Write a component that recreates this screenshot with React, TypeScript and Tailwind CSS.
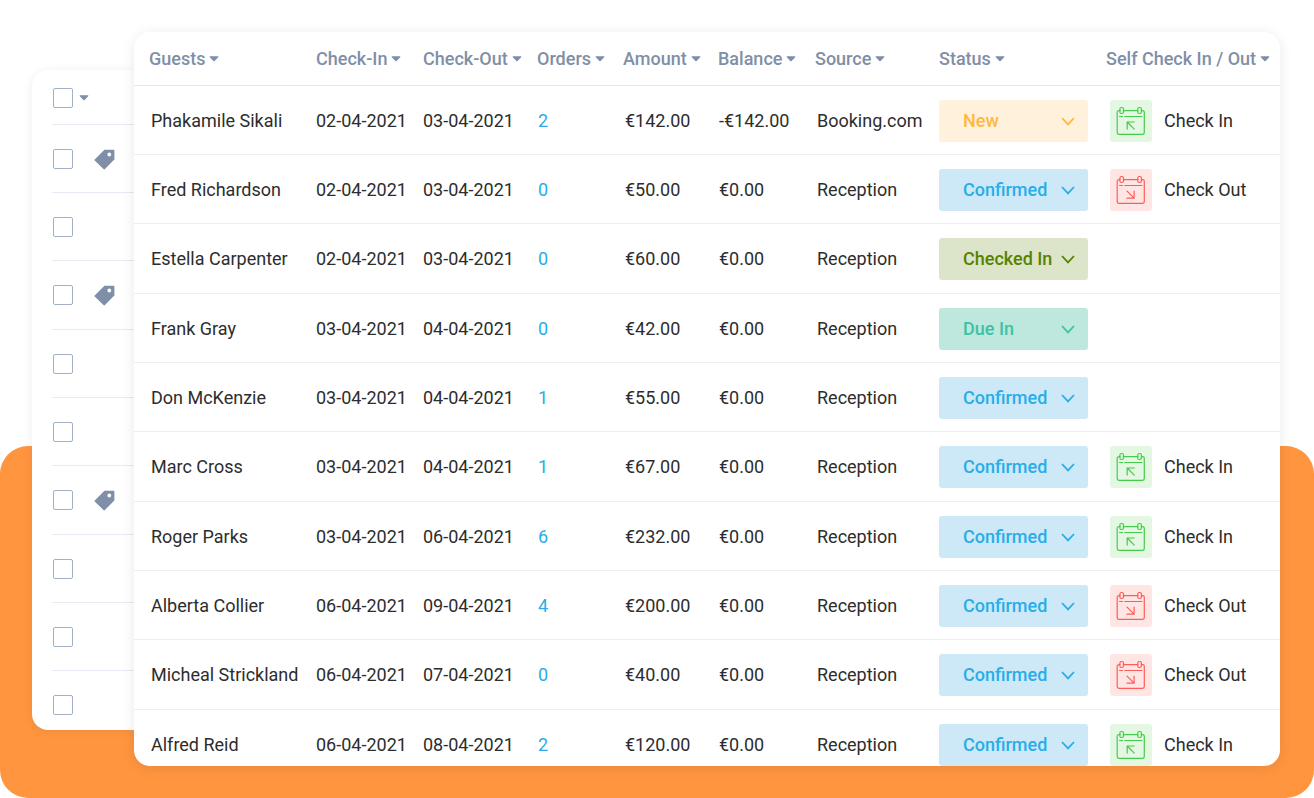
import React from 'react';
import clsx from 'clsx';

type Status = 'New' | 'Confirmed' | 'Checked In' | 'Due In';
type SelfCheck = 'in' | 'out';

interface Booking {
  guest: string;
  checkIn: string;
  checkOut: string;
  orders: number;
  amount: string;
  balance: string;
  source: string;
  status: Status;
  selfCheck?: SelfCheck;
}

const statusStyles: Record<Status, string> = {
  New: 'bg-[#fff1dc] text-[#ffb840]',
  Confirmed: 'bg-[#cde8f7] text-[#27aee8]',
  'Checked In': 'bg-[#dce5ca] text-[#578200]',
  'Due In': 'bg-[#bee8dd] text-[#3fc1a5]',
};

const statuses = Object.keys(statusStyles) as Status[];

const columns = [
  { label: 'Guests', width: 'w-[182px]', pad: 'pl-[15px]' },
  { label: 'Check-In', width: 'w-[107px]' },
  { label: 'Check-Out', width: 'w-[114px]' },
  { label: 'Orders', width: 'w-[86px]' },
  { label: 'Amount', width: 'w-[95px]' },
  { label: 'Balance', width: 'w-[97px]' },
  { label: 'Source', width: 'w-[124px]' },
  { label: 'Status', width: 'w-[167px]' },
  { label: 'Self Check In / Out', width: 'w-[174px]' },
];

const bookings: Booking[] = [
  { guest: 'Phakamile Sikali', checkIn: '02-04-2021', checkOut: '03-04-2021', orders: 2, amount: '€142.00', balance: '-€142.00', source: 'Booking.com', status: 'New', selfCheck: 'in' },
  { guest: 'Fred Richardson', checkIn: '02-04-2021', checkOut: '03-04-2021', orders: 0, amount: '€50.00', balance: '€0.00', source: 'Reception', status: 'Confirmed', selfCheck: 'out' },
  { guest: 'Estella Carpenter', checkIn: '02-04-2021', checkOut: '03-04-2021', orders: 0, amount: '€60.00', balance: '€0.00', source: 'Reception', status: 'Checked In' },
  { guest: 'Frank Gray', checkIn: '03-04-2021', checkOut: '04-04-2021', orders: 0, amount: '€42.00', balance: '€0.00', source: 'Reception', status: 'Due In' },
  { guest: 'Don McKenzie', checkIn: '03-04-2021', checkOut: '04-04-2021', orders: 1, amount: '€55.00', balance: '€0.00', source: 'Reception', status: 'Confirmed' },
  { guest: 'Marc Cross', checkIn: '03-04-2021', checkOut: '04-04-2021', orders: 1, amount: '€67.00', balance: '€0.00', source: 'Reception', status: 'Confirmed', selfCheck: 'in' },
  { guest: 'Roger Parks', checkIn: '03-04-2021', checkOut: '06-04-2021', orders: 6, amount: '€232.00', balance: '€0.00', source: 'Reception', status: 'Confirmed', selfCheck: 'in' },
  { guest: 'Alberta Collier', checkIn: '06-04-2021', checkOut: '09-04-2021', orders: 4, amount: '€200.00', balance: '€0.00', source: 'Reception', status: 'Confirmed', selfCheck: 'out' },
  { guest: 'Micheal Strickland', checkIn: '06-04-2021', checkOut: '07-04-2021', orders: 0, amount: '€40.00', balance: '€0.00', source: 'Reception', status: 'Confirmed', selfCheck: 'out' },
  { guest: 'Alfred Reid', checkIn: '06-04-2021', checkOut: '08-04-2021', orders: 2, amount: '€120.00', balance: '€0.00', source: 'Reception', status: 'Confirmed', selfCheck: 'in' },
];

// one entry per row of the selection list, true when the row is tagged
const tagged = [true, false, true, false, false, true, false, false, false];

function Caret() {
  return (
    <svg width="10" height="6" viewBox="0 0 10 6" fill="currentColor" className="shrink-0" aria-hidden="true">
      <path d="M1.2 0.3h7.6c.5 0 .7.5.4.9L5.6 5a.8.8 0 0 1-1.2 0L.8 1.200c-.3-.4-.1-.9.4-.9z" />
    </svg>
  );
}

function TagIcon() {
  return (
    <svg width="21" height="21" viewBox="0 0 21 21" fill="#7f8fa7" aria-hidden="true">
      <path
        fillRule="evenodd"
        d="M10.800.8h8.900c.4 0 .7.3.7.7v8.500c0 .3-.1.500-.3.7L10.700 20.200c-.3.3-.7.3-1 0L.7 11.500c-.3-.3-.3-.7 0-1L10.200 1c.2-.1.4-.2.6-.2zM15.300 3.600a1.900 1.900 0 1 0 0 3.800 1.900 1.900 0 0 0 0-3.800z"
      />
    </svg>
  );
}

function CalendarIcon({ type }: { type: SelfCheck }) {
  return (
    <svg
      width="42"
      height="42"
      viewBox="0 0 42 42"
      fill="none"
      stroke="currentColor"
      strokeWidth="1.2"
      strokeLinecap="round"
      strokeLinejoin="round"
      aria-hidden="true"
    >
      <path d="M9.900 10.600H8.900a1.700 1.700 0 0 0-1.700 1.700v20.300a1.700 1.700 0 0 0 1.700 1.700h23.700a1.700 1.700 0 0 0 1.700-1.700V12.300a1.700 1.700 0 0 0-1.700-1.700h-1.200M13.500 10.600h14.300" />
      <rect x="9.900" y="7.500" width="3.600" height="6" rx="1.500" />
      <rect x="27.800" y="7.500" width="3.600" height="6" rx="1.500" />
      <path d="M9.500 16.500h3M14.800 16.500h17.200" />
      {type === 'in' ? (
        <path d="M24.300 22H17.200v7.100M17.200 22l7.100 7.100" />
      ) : (
        <path d="M17 29.200h7.100v-7.100M24.100 29.200L17 22.100" />
      )}
    </svg>
  );
}

function StatusSelect({ status, guest }: { status: Status; guest: string }) {
  return (
    <div className={clsx('relative w-[149px] h-[42px] rounded-[3px]', statusStyles[status])}>
      <select
        defaultValue={status}
        aria-label={`Status of ${guest}`}
        className="block w-full h-full appearance-none bg-transparent pl-6 pr-8 font-medium cursor-pointer"
      >
        {statuses.map((s) => (
          <option key={s}>{s}</option>
        ))}
      </select>
      <svg
        width="14"
        height="9"
        viewBox="0 0 14 9"
        fill="none"
        stroke="currentColor"
        strokeWidth="1.8"
        className="absolute right-[13px] top-[17px] pointer-events-none"
        aria-hidden="true"
      >
        <path d="M1 1l6 6.400L13 1" />
      </svg>
    </div>
  );
}

function SelfCheckButton({ type }: { type: SelfCheck }) {
  return (
    <button className="flex items-center gap-3 cursor-pointer">
      <span
        className={clsx(
          'rounded-[3px]',
          type === 'in' ? 'bg-[#e3f7e3] text-[#47cb4b]' : 'bg-[#ffe6e5] text-[#ff5c58]'
        )}
      >
        <CalendarIcon type={type} />
      </span>
      {type === 'in' ? 'Check In' : 'Check Out'}
    </button>
  );
}

function Checkbox({ label }: { label: string }) {
  return (
    <input
      type="checkbox"
      aria-label={label}
      className="block size-5 shrink-0 appearance-none rounded-[2px] border border-[#a3afc2] bg-white checked:bg-[#7f8fa7]"
    />
  );
}

function SelectionList() {
  return (
    <aside className="mt-[38px] w-[102px] shrink-0 self-start rounded-l-2xl bg-white pl-5 shadow-[0_1px_10px_rgba(0,0,0,0.07)] text-[#7f8fa7]">
      <div className="flex items-center gap-1.5 pt-[18px] pb-4 pl-px">
        <Checkbox label="Select all" />
        <button aria-label="Selection options">
          <Caret />
        </button>
      </div>
      <ul>
        {tagged.map((hasTag, i) => (
          <li
            key={i}
            className="flex h-[68px] items-start gap-[21px] border-t border-[#e6eaf2] pt-6 pl-px not-last:nth-[3n]:h-[69px] last:h-[60px]"
          >
            <Checkbox label={`Select ${bookings[i].guest}`} />
            {hasTag && <TagIcon />}
          </li>
        ))}
      </ul>
    </aside>
  );
}

function BookingsTable() {
  return (
    <main className="relative min-w-0 flex-1 overflow-hidden rounded-2xl bg-white shadow-[0_2px_14px_rgba(0,0,0,0.09)]">
      <table className="w-full table-fixed border-separate border-spacing-0 whitespace-nowrap text-left">
        <thead>
          <tr className="text-[#7f8fa7]">
            {columns.map((col) => (
              <th key={col.label} className={clsx('h-[54px] border-b border-[#e4e7ec] font-medium', col.width, col.pad)}>
                <button className="flex items-center gap-1 cursor-pointer">
                  {col.label}
                  <Caret />
                </button>
              </th>
            ))}
          </tr>
        </thead>
        <tbody className="leading-[42px]">
          {bookings.map((b) => (
            <tr
              key={b.guest}
              className="*:border-b *:border-[#eceef4] *:pt-[14px] *:pb-3 nth-[3n]:*:pb-[13px] last:*:border-b-0 last:*:pb-0"
            >
              <td className="pl-[17px]">{b.guest}</td>
              <td>{b.checkIn}</td>
              <td>{b.checkOut}</td>
              <td className="pl-px">
                <a href="#orders" className="text-[#27aee8]">{b.orders}</a>
              </td>
              <td className="pl-0.5">{b.amount}</td>
              <td className="pl-px">{b.balance}</td>
              <td className="pl-0.5">{b.source}</td>
              <td>
                <StatusSelect status={b.status} guest={b.guest} />
              </td>
              <td className="pl-1">{b.selfCheck && <SelfCheckButton type={b.selfCheck} />}</td>
            </tr>
          ))}
        </tbody>
      </table>
    </main>
  );
}

export default function App() {
  return (
    <div className="grid min-h-screen bg-white font-[Roboto,sans-serif] text-[18px] text-[#2d2d2d]">
      <div className="col-start-1 row-start-1 h-[352px] self-end rounded-[28px] bg-[#ff953f]" />
      <div className="col-start-1 row-start-1 flex self-start pt-8 pr-[34px] pb-8 pl-8">
        <SelectionList />
        <BookingsTable />
      </div>
    </div>
  );
}
